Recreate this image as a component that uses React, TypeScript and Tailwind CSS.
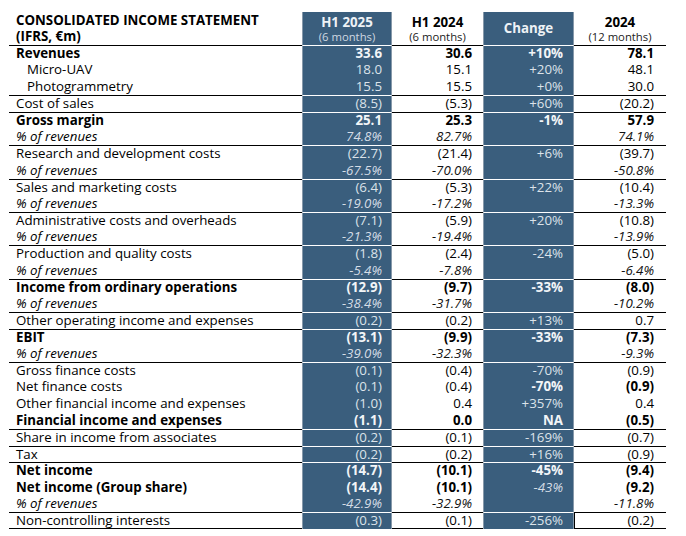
import React from "react";

type Row = {
  label: string;
  kind?: "bold" | "indent" | "pct";
  line?: boolean;
  v: string[];
};

const rows: Row[] = [
  { label: "Revenues", kind: "bold", line: true, v: ["*33.6", "*30.6", "*+10%", "*78.1"] },
  { label: "Micro-UAV", kind: "indent", v: ["18.0", "15.1", "+20%", "48.1"] },
  { label: "Photogrammetry", kind: "indent", v: ["15.5", "15.5", "+0%", "30.0"] },
  { label: "Cost of sales", line: true, v: ["(8.5)", "(5.3)", "+60%", "(20.2)"] },
  { label: "Gross margin", kind: "bold", line: true, v: ["*25.1", "*25.3", "*-1%", "*57.9"] },
  { label: "% of revenues", kind: "pct", v: ["_74.8%", "_82.7%", "", "_74.1%"] },
  { label: "Research and development costs", line: true, v: ["(22.7)", "(21.4)", "+6%", "(39.7)"] },
  { label: "% of revenues", kind: "pct", v: ["_-67.5%", "_-70.0%", "", "_-50.8%"] },
  { label: "Sales and marketing costs", line: true, v: ["(6.4)", "(5.3)", "+22%", "(10.4)"] },
  { label: "% of revenues", kind: "pct", v: ["_-19.0%", "_-17.2%", "", "_-13.3%"] },
  { label: "Administrative costs and overheads", line: true, v: ["(7.1)", "(5.9)", "+20%", "(10.8)"] },
  { label: "% of revenues", kind: "pct", v: ["_-21.3%", "_-19.4%", "", "_-13.9%"] },
  { label: "Production and quality costs", line: true, v: ["(1.8)", "(2.4)", "-24%", "(5.0)"] },
  { label: "% of revenues", kind: "pct", v: ["_-5.4%", "_-7.8%", "", "_-6.4%"] },
  { label: "Income from ordinary operations", kind: "bold", line: true, v: ["*(12.9)", "*(9.7)", "*-33%", "*(8.0)"] },
  { label: "% of revenues", kind: "pct", v: ["_-38.4%", "_-31.7%", "", "_-10.2%"] },
  { label: "Other operating income and expenses", line: true, v: ["(0.2)", "(0.2)", "+13%", "0.7"] },
  { label: "EBIT", kind: "bold", line: true, v: ["*(13.1)", "*(9.9)", "*-33%", "*(7.3)"] },
  { label: "% of revenues", kind: "pct", v: ["_-39.0%", "_-32.3%", "", "_-9.3%"] },
  { label: "Gross finance costs", line: true, v: ["(0.1)", "(0.4)", "-70%", "(0.9)"] },
  { label: "Net finance costs", v: ["(0.1)", "(0.4)", "*-70%", "*(0.9)"] },
  { label: "Other financial income and expenses", v: ["(1.0)", "0.4", "+357%", "0.4"] },
  { label: "Financial income and expenses", kind: "bold", v: ["*(1.1)", "*0.0", "*NA", "*(0.5)"] },
  { label: "Share in income from associates", line: true, v: ["(0.2)", "(0.1)", "-169%", "(0.7)"] },
  { label: "Tax", line: true, v: ["(0.2)", "(0.2)", "+16%", "(0.9)"] },
  { label: "Net income", kind: "bold", line: true, v: ["*(14.7)", "*(10.1)", "*-45%", "*(9.4)"] },
  { label: "Net income (Group share)", kind: "bold", v: ["*(14.4)", "*(10.1)", "_-43%", "*(9.2)"] },
  { label: "% of revenues", kind: "pct", v: ["_-42.9%", "_-32.9%", "", "_-11.8%"] },
  { label: "Non-controlling interests", line: true, v: ["(0.3)", "(0.1)", "-256%", "(0.2)"] },
];

const blueCols = [true, false, true, false];
const padCols = ["pr-[9px]", "pr-[11px]", "pr-[10px]", "pr-[12px]"];

function Val({ s, blue }: { s: string; blue: boolean }) {
  if (!s) return null;
  if (s.startsWith("*"))
    return <span className={blue ? "font-bold text-[#f2f5f8]" : "font-bold text-black"}>{s.slice(1)}</span>;
  if (s.startsWith("_"))
    return <span className={blue ? "italic text-[#d5dde6]" : "italic text-[#111]"}>{s.slice(1)}</span>;
  return <span className={blue ? "text-[#dce3ea]" : "text-black"}>{s}</span>;
}

export default function App() {
  return (
    <div className="w-[686px] h-[536px] bg-white pt-[12px] pl-[9px]" style={{ fontFamily: "'Open Sans', 'Liberation Sans', sans-serif" }}>
      <div className="w-[657px] text-[13.3px]">
        {/* header */}
        <div className="grid grid-cols-[293px_90px_91px_91px_92px] h-[33px]">
          <div className="pl-[7px] font-bold leading-[16px] text-black">
            <div>CONSOLIDATED INCOME STATEMENT</div>
            <div>(IFRS, €m)</div>
          </div>
          <div className="bg-[#3a5e7d] border-x border-[#8799aa] flex flex-col items-center pt-[2px]">
            <div className="font-bold leading-[16px] text-[#eef2f6]">H1 2025</div>
            <div className="text-[11.3px] leading-[13px] text-[#cfd8e1]">(6 months)</div>
          </div>
          <div className="flex flex-col items-center pt-[2px]">
            <div className="font-bold leading-[16px] text-black">H1 2024</div>
            <div className="text-[11.3px] leading-[13px] text-[#222]">(6 months)</div>
          </div>
          <div className="bg-[#3a5e7d] border-x border-[#8799aa] flex items-center justify-center">
            <div className="font-bold text-[13.3px] text-[#eef2f6]">Change</div>
          </div>
          <div className="flex flex-col items-center pt-[2px]">
            <div className="font-bold leading-[16px] text-black">2024</div>
            <div className="text-[11.3px] leading-[13px] text-[#222]">(12 months)</div>
          </div>
        </div>
        {rows.map((r, i) => {
          const last = i === rows.length - 1;
          const labelCls =
            r.kind === "bold"
              ? "font-bold pl-[7px]"
              : r.kind === "indent"
              ? "pl-[18px]"
              : r.kind === "pct"
              ? "italic pl-[7px]"
              : "pl-[7px]";
          return (
            <div key={i} className="grid grid-cols-[293px_90px_91px_91px_92px] h-[16.7px]">
              <div
                className={`flex items-center leading-none text-black whitespace-nowrap ${labelCls} ${
                  r.line ? "border-t border-black" : ""
                } ${last ? "border-b border-black" : ""}`}
              >
                {r.label}
              </div>
              {r.v.map((s, j) => {
                const blue = blueCols[j];
                const border = blue
                  ? `bg-[#3a5e7d] border-x border-[#8799aa] ${r.line ? "border-t border-t-white" : ""}`
                  : `${r.line ? "border-t border-black" : ""} ${last ? "border-b border-black" : ""} ${
                      last && j === 3 ? "border-l border-l-black" : ""
                    }`;
                return (
                  <div
                    key={j}
                    className={`flex items-center justify-end leading-none whitespace-nowrap ${padCols[j]} ${border}`}
                  >
                    <Val s={s} blue={blue} />
                  </div>
                );
              })}
            </div>
          );
        })}
      </div>
    </div>
  );
}
